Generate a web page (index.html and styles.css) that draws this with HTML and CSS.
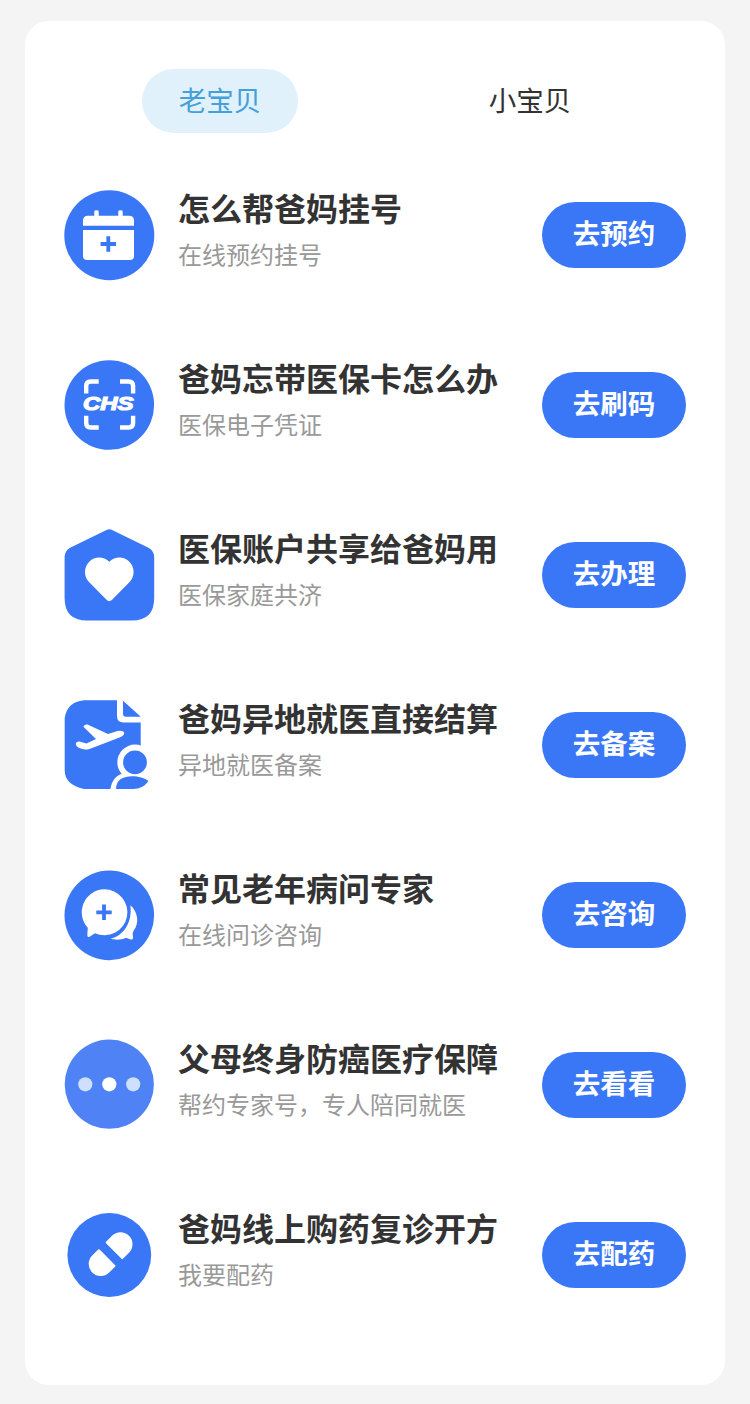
FILE: index.html
```html
<!DOCTYPE html>
<html lang="zh-CN">
<head>
    <meta charset="UTF-8">
    <meta name="viewport" content="width=device-width, initial-scale=1.0">
    <title>老宝贝</title>
    <link rel="stylesheet" href="styles.css">
</head>
<body>
    <main class="card">
        <nav class="tabs">
            <a class="tab active">老宝贝</a>
            <a class="tab">小宝贝</a>
        </nav>

        <ul class="service-list">
            <li class="service">
                <svg class="icon" viewBox="0 0 90 90">
                    <circle class="blue" cx="45.3" cy="45.2" r="45"/>
                    <path class="white" d="M19 35.7V30.5Q19 25.7 24 25.7H30.3V21.5Q30.3 20.3 32.5 20.3T34.7 21.5V25.7H54.3V21.5Q54.3 20.3 56.5 20.3T58.7 21.5V25.7H65Q70 25.7 70 30.5V35.7Z"/>
                    <path class="white" d="M19 40H70V66Q70 70 66 70H23Q19 70 19 66Z"/>
                    <path class="line-blue" stroke-width="3.8" d="M36.6 54H52M44.3 46.3V61.7"/>
                </svg>
                <div class="info">
                    <h2 class="title">怎么帮爸妈挂号</h2>
                    <p class="desc">在线预约挂号</p>
                </div>
                <button class="btn">去预约</button>
            </li>

            <li class="service">
                <svg class="icon" viewBox="0 0 90 90">
                    <circle class="blue" cx="45.3" cy="45" r="44.8"/>
                    <path class="line-white" stroke-width="4.4" d="M22.2 33.5V26Q22.2 21.5 26.7 21.5H34.7M56 21.5H64.6Q69.1 21.5 69.1 26V33.5M22.2 55.7V63Q22.2 67.5 26.7 67.5H34.7M56 67.5H64.6Q69.1 67.5 69.1 63V55.7"/>
                    <text class="chs" x="19" y="50" textLength="50.5" lengthAdjust="spacingAndGlyphs">CHS</text>
                </svg>
                <div class="info">
                    <h2 class="title">爸妈忘带医保卡怎么办</h2>
                    <p class="desc">医保电子凭证</p>
                </div>
                <button class="btn">去刷码</button>
            </li>

            <li class="service">
                <svg class="icon" viewBox="0 0 90 90">
                    <path class="blue" d="M42.5 0Q45.3 -1.6 48.1 0L84 17.4Q90.2 20.5 90.2 27V68Q90.2 90.5 68 90.5H23Q.6 90.5 .6 68V27Q.6 20.5 6.6 17.4Z"/>
                    <path class="white" d="M45.3 31.7C39 25.8 30.5 26.6 25.5 31.5C19.6 37.2 19.6 46.5 25 52L42.5 69.8Q45.3 72.6 48.1 69.8L65.6 52C71 46.5 71 37.2 65.1 31.5C60.1 26.6 51.6 25.8 45.3 31.7Z"/>
                </svg>
                <div class="info">
                    <h2 class="title">医保账户共享给爸妈用</h2>
                    <p class="desc">医保家庭共济</p>
                </div>
                <button class="btn">去办理</button>
            </li>

            <li class="service">
                <svg class="icon" viewBox="0 0 90 90">
                    <path class="blue" d="M20 .2H53V16Q53 22.5 59.5 22.5H76.7V88.9H20Q.7 85 .7 70V18Q3 2 20 .2Z"/>
                    <path class="blue" d="M59 .8L76.8 16.8H62Q59 16.8 59 13.8Z"/>
                    <circle class="white" cx="71" cy="62.3" r="17.7"/>
                    <path class="white" d="M46.3 90Q48 76 60 73H90V90Z"/>
                    <circle class="blue" cx="71" cy="62.3" r="11.9"/>
                    <path class="blue" d="M52 89C52 72.5 76 74.5 84.5 81Q79 89 69 89Z"/>
                    <path class="white" d="M19.4 26.8Q20.5 24 23.5 24.6L44 34L53.5 31Q59.5 30.2 60.2 33Q60.3 35.6 55.5 37.5L25.5 48.9Q21 50.3 17.5 48.8Q12.5 47 11.8 44.4Q11.7 41.5 15.5 41.6L22.5 43.4L32 39Z"/>
                </svg>
                <div class="info">
                    <h2 class="title">爸妈异地就医直接结算</h2>
                    <p class="desc">异地就医备案</p>
                </div>
                <button class="btn">去备案</button>
            </li>

            <li class="service">
                <svg class="icon" viewBox="0 0 90 90">
                    <circle class="blue" cx="45.3" cy="45.4" r="44.8"/>
                    <path class="white" d="M66.3 35.2C74 41.5 75.5 53.5 69.7 60.5Q68.3 62.8 68.8 65L69 68Q68.8 70 66.7 69.4L62 67.8C56.5 70.4 50.5 69.9 46.5 68.8C61 65 68.5 51 66.3 35.2Z"/>
                    <path class="white" d="M40.2 19.3A23 23 0 1 1 31 63.3L25.5 66.7Q23.2 67.6 23.3 65L23.8 57.8A23 23 0 0 1 40.2 19.3Z"/>
                    <path class="line-blue" stroke-width="3.8" d="M32.3 42.3H47.7M40 34.6V50"/>
                </svg>
                <div class="info">
                    <h2 class="title">常见老年病问专家</h2>
                    <p class="desc">在线问诊咨询</p>
                </div>
                <button class="btn">去咨询</button>
            </li>

            <li class="service">
                <svg class="icon" viewBox="0 0 90 90">
                    <circle class="light-blue" cx="45.3" cy="44.2" r="44.6"/>
                    <circle class="dot" cx="21.3" cy="44.3" r="7.1"/>
                    <circle class="white" cx="45.3" cy="44.3" r="7.1"/>
                    <circle class="dot" cx="69.2" cy="44.3" r="7.1"/>
                </svg>
                <div class="info">
                    <h2 class="title">父母终身防癌医疗保障</h2>
                    <p class="desc">帮约专家号，专人陪同就医</p>
                </div>
                <button class="btn">去看看</button>
            </li>

            <li class="service">
                <svg class="icon" viewBox="0 0 90 90">
                    <circle class="blue" cx="45.3" cy="45" r="41.9"/>
                    <g class="white" transform="translate(46.6 44.2) rotate(-45)">
                        <path d="M5.5 -12H14A12 12 0 0 1 14 12H5.5Q4.5 12 4.5 11V-11Q4.5 -12 5.5 -12Z"/>
                        <path d="M-5.5 -12H-14A12 12 0 0 0 -14 12H-5.5Q-4.5 12 -4.5 11V-11Q-4.5 -12 -5.5 -12Z"/>
                    </g>
                </svg>
                <div class="info">
                    <h2 class="title">爸妈线上购药复诊开方</h2>
                    <p class="desc">我要配药</p>
                </div>
                <button class="btn">去配药</button>
            </li>
        </ul>
    </main>
</body>
</html>
```
FILE: styles.css
```css
* {
    margin: 0;
    padding: 0;
    box-sizing: border-box;
}

body {
    padding: 21px 25px 19px;
    font-family: "Noto Sans CJK SC", sans-serif;
    background: #f4f4f4;
}

.card {
    height: 1364px;
    padding: 48px 39px 0;
    background: white;
    border-radius: 24px;
}

.tabs {
    display: flex;
    justify-content: center;
    gap: 154px;
}

.tab {
    width: 156px;
    height: 64px;
    line-height: 60px;
    border-radius: 32px;
    font-size: 27.5px;
    text-align: center;
    color: #333;
}

.tab.active {
    background: #e0f1fc;
    color: #459fd9;
}

.service-list {
    display: flex;
    flex-direction: column;
    gap: 80px;
    margin-top: 57px;
    list-style: none;
}

.service {
    display: flex;
    align-items: center;
    height: 90px;
}

.icon {
    width: 90px;
    height: 90px;
    margin-right: 24px;
    flex-shrink: 0;
    overflow: visible;
}

.blue {
    fill: #3977f6;
}

.light-blue {
    fill: #4f82f4;
}

.white {
    fill: white;
}

.dot {
    fill: #cfe0fc;
}

.line-blue {
    fill: none;
    stroke: #3977f6;
}

.line-white {
    fill: none;
    stroke: white;
}

.chs {
    fill: white;
    stroke: white;
    stroke-width: 1.2px;
    font-family: "Liberation Sans", sans-serif;
    font-size: 18.5px;
    font-weight: bold;
    font-style: italic;
}

.info {
    flex: 1;
    height: 90px;
    white-space: nowrap;
}

.title {
    margin-top: -3px;
    font-size: 32px;
    font-weight: bold;
    line-height: 40px;
    color: #333;
}

.desc {
    margin-top: 11px;
    font-size: 24px;
    line-height: 32px;
    color: #999;
}

.btn {
    width: 144px;
    height: 66px;
    padding-bottom: 7px;
    border: none;
    border-radius: 33px;
    background: #3977f6;
    color: white;
    font-family: inherit;
    font-size: 27.5px;
    font-weight: bold;
}
```
